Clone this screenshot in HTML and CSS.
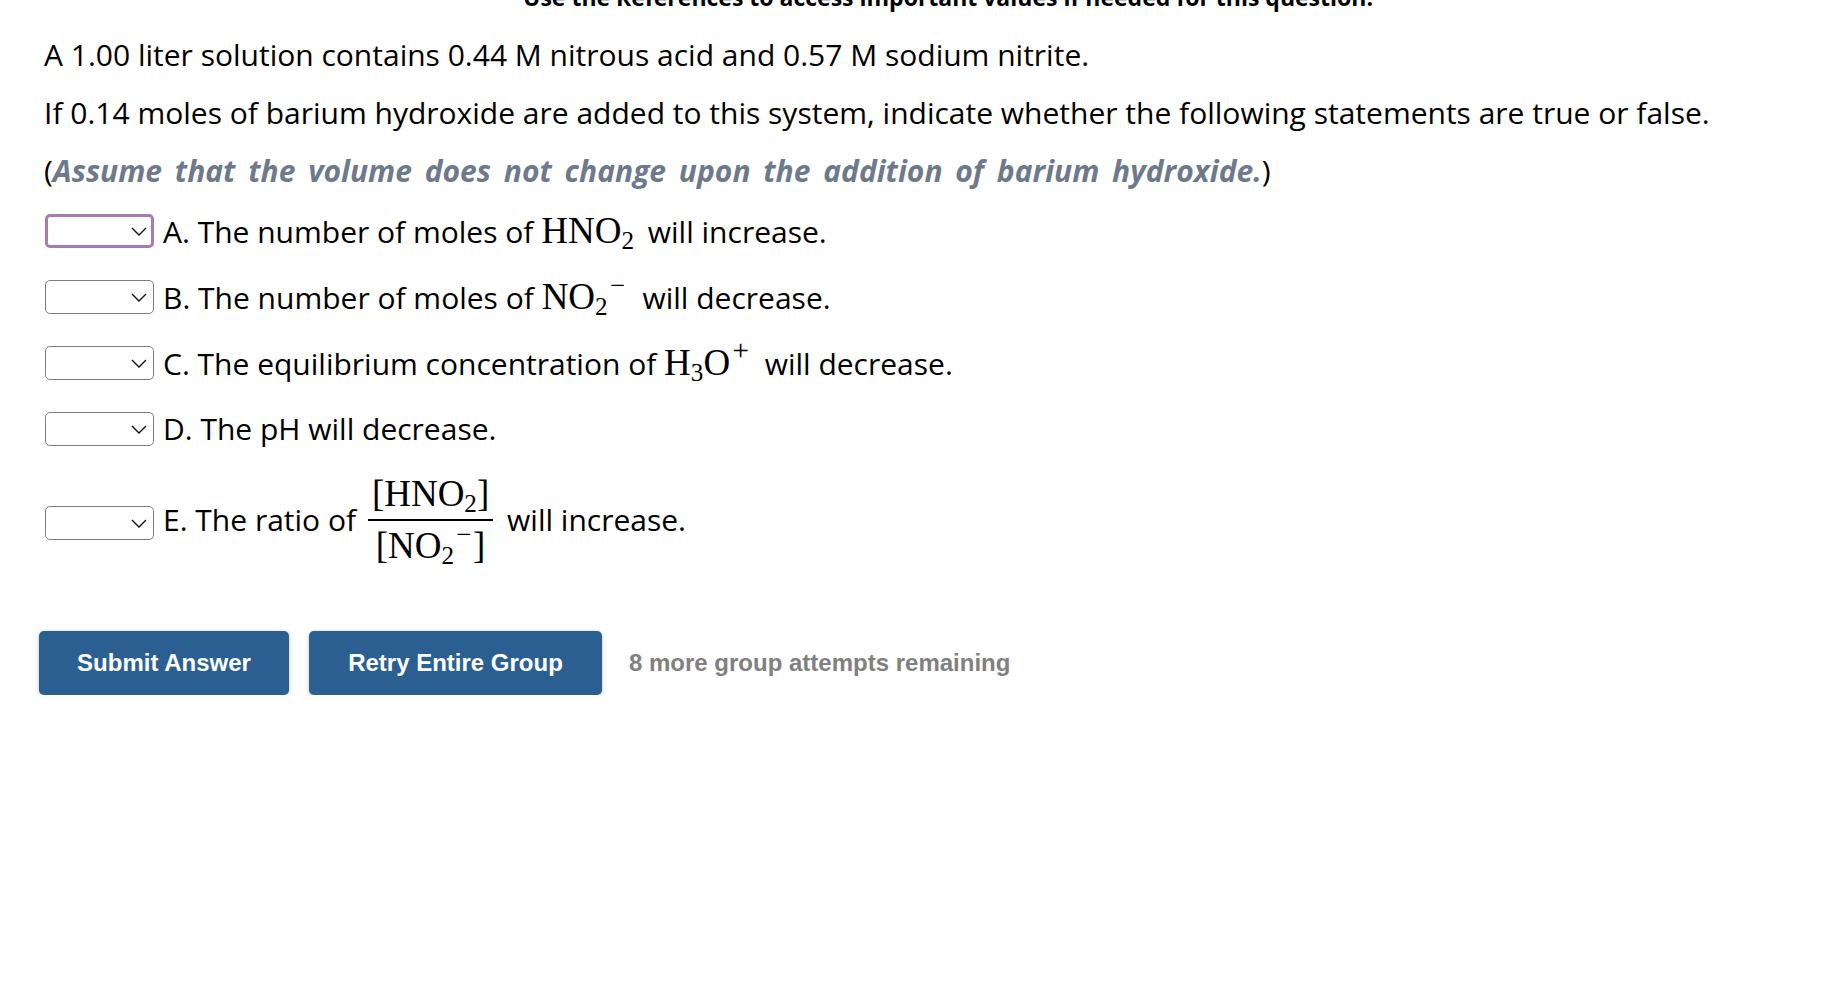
FILE: index.html
```html
<!DOCTYPE html>
<html lang="en">
<head>
<meta charset="utf-8">
<title>Buffer question</title>
<link rel="stylesheet" href="styles.css">
</head>
<body>
<div class="page">
  <div class="refs">Use the References to access important values if needed for this question.</div>
  <div class="question">
    <p class="q">A 1.00 liter solution contains 0.44 M nitrous acid and 0.57 M sodium nitrite.</p>
    <p class="q">If 0.14 moles of barium hydroxide are added to this system, indicate whether the following statements are true or false.</p>
    <p class="q">(<em class="note">Assume that the volume does not change upon the addition of barium hydroxide.</em>)</p>
  </div>
  <div class="items">
    <div class="item">
      <span class="sel sel-active"><svg class="chev" viewBox="0 0 16 9" width="16" height="9"><path d="M1 1l7 7 7-7"/></svg></span>
      <span class="lbl">A. The number of moles of <span class="m m-gap">HNO<sub>2</sub></span> will increase.</span>
    </div>
    <div class="item">
      <span class="sel"><svg class="chev" viewBox="0 0 16 9" width="16" height="9"><path d="M1 1l7 7 7-7"/></svg></span>
      <span class="lbl">B. The number of moles of <span class="m">NO<sub>2</sub><sup class="minus">−</sup></span> will decrease.</span>
    </div>
    <div class="item">
      <span class="sel"><svg class="chev" viewBox="0 0 16 9" width="16" height="9"><path d="M1 1l7 7 7-7"/></svg></span>
      <span class="lbl">C. The equilibrium concentration of <span class="m">H<sub>3</sub>O<sup class="plus">+</sup></span> will decrease.</span>
    </div>
    <div class="item">
      <span class="sel"><svg class="chev" viewBox="0 0 16 9" width="16" height="9"><path d="M1 1l7 7 7-7"/></svg></span>
      <span class="lbl">D. The pH will decrease.</span>
    </div>
    <div class="item item-tall">
      <span class="sel"><svg class="chev" viewBox="0 0 16 9" width="16" height="9"><path d="M1 1l7 7 7-7"/></svg></span>
      <span class="lbl">E. The ratio of
        <span class="frac m">
          <span class="num">[HNO<sub>2</sub>]</span>
          <span class="den">[NO<sub>2</sub><sup class="minus">−</sup>]</span>
        </span>
        will increase.</span>
    </div>
  </div>
  <div class="actions">
    <button class="btn btn-submit">Submit Answer</button>
    <button class="btn btn-retry">Retry Entire Group</button>
    <span class="remaining">8 more group attempts remaining</span>
  </div>
</div>
</body>
</html>
```
FILE: styles.css
```css
html, body {
  margin: 0;
  padding: 0;
  background: #ffffff;
}
body {
  font-family: "Open Sans", "Noto Sans", sans-serif;
  color: #000;
  overflow: hidden;
}
.page {
  padding-left: 44px;
}
.refs {
  margin-top: -17px;
  height: 28px;
  line-height: 28px;
  text-align: center;
  padding-left: 18px;
  font-weight: 700;
  font-size: 23px;
  color: #000;
}
.question {
  margin-top: 15px;
}
.q {
  margin: 0;
  font-size: 30px;
  line-height: 58px;
}
.note {
  font-weight: 700;
  font-style: italic;
  color: #6e7a8c;
  word-spacing: 5px;
}
.items {
  margin-top: 11px;
  display: flex;
  flex-direction: column;
  gap: 26px;
}
.item {
  display: flex;
  align-items: center;
  height: 40px;
  line-height: 40px;
  font-size: 30px;
}
.item-tall {
  height: 96px;
}
.sel {
  box-sizing: border-box;
  width: 109px;
  height: 34px;
  margin-left: 1px;
  margin-right: 9px;
  border: 1.5px solid #7d7d7d;
  border-radius: 5px;
  display: flex;
  align-items: center;
  justify-content: flex-end;
  padding-right: 6px;
  flex: none;
}
.sel-active {
  border: 3px solid #a67cb3;
  padding-right: 4px;
}
.chev path {
  fill: none;
  stroke: #111;
  stroke-width: 1.4;
}
.lbl {
  white-space: nowrap;
}
.m {
  font-family: "Liberation Serif", "DejaVu Serif", serif;
  font-size: 37px;
  line-height: 40px;
}
.m-gap {
  margin-right: 6px;
}
.m sub {
  font-size: 0.68em;
  vertical-align: -0.22em;
  line-height: 0;
}
.m sup {
  font-size: 0.72em;
  vertical-align: 0.55em;
  line-height: 0;
  margin-left: 2px;
  margin-right: 10px;
}
.m sup.plus {
  font-size: 0.8em;
  vertical-align: 0.5em;
  margin-right: 8px;
}
.frac {
  display: inline-flex;
  flex-direction: column;
  align-items: center;
  vertical-align: middle;
  margin: 0 6px 0 4px;
  position: relative;
  top: -3px;
}
.frac .num {
  padding: 0 4px 4px;
  border-bottom: 2px solid #000;
  line-height: 42px;
}
.frac .den {
  padding-top: 4px;
  line-height: 42px;
}
.frac .den sup {
  margin-right: 2px;
}
.actions {
  margin-top: 60px;
  margin-left: -5px;
  display: flex;
  align-items: center;
  gap: 20px;
}
.btn {
  font-family: "Liberation Sans", Arial, sans-serif;
  font-weight: 700;
  font-size: 24px;
  color: #fff;
  background: #2b5f91;
  border: none;
  border-radius: 5px;
  height: 64px;
  box-shadow: 0 1px 4px rgba(0, 0, 0, 0.25);
}
.btn-submit {
  width: 250px;
}
.btn-retry {
  width: 293px;
}
.remaining {
  margin-left: 7px;
  font-family: "Liberation Sans", Arial, sans-serif;
  font-weight: 700;
  font-size: 24px;
  color: #808080;
}
```
